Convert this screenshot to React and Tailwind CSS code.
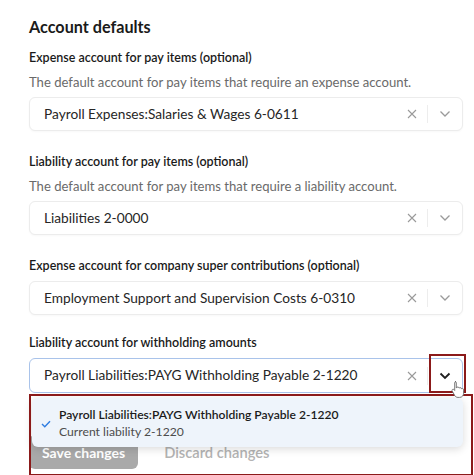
import React from 'react';

const font = { fontFamily: 'Lato, "Noto Sans", sans-serif' };

const ClearIcon = () => (
  <svg width="10" height="10" viewBox="0 0 10 10" className="text-[#9a9a9a]">
    <path d="M1 1l8 8M9 1l-8 8" stroke="currentColor" strokeWidth="1.1" fill="none" />
  </svg>
);

const Chevron = ({ dark }) => (
  <svg width="12" height="8" viewBox="0 0 12 8" className={dark ? 'text-[#1f1f1f]' : 'text-[#9a9a9a]'}>
    <path d="M1.5 1.5l4.5 4.5 4.5-4.5" stroke="currentColor" strokeWidth={dark ? 1.8 : 1.3} fill="none" />
  </svg>
);

const SelectBox = ({ value, focused }) => (
  <div
    className={`flex items-center rounded-md bg-white ${
      focused ? 'border border-[#a9c3ea] h-[35px]' : 'border border-[#ececec] h-[34px] shadow-[0_1px_2px_rgba(0,0,0,0.03)]'
    }`}
  >
    <span className="flex-1 pl-[14px] text-[13.7px] text-[#262626] truncate">{value}</span>
    <div className="w-[30px] flex justify-center">
      <ClearIcon />
    </div>
    <div className="w-px h-[18px] bg-[#ededed]" />
    <div className="w-[34px] flex justify-center">
      <Chevron dark={focused} />
    </div>
  </div>
);

const Field = ({ label, hint, value, focused, gap = 'mt-[21px]' }) => (
  <div className={gap}>
    <div className="text-[12.5px] leading-5 font-semibold text-[#1a1a1a]">{label}</div>
    {hint && <div className="mt-1 text-[13.1px] leading-5 text-[#6a6a6a]">{hint}</div>}
    <div className="mt-[5px]">
      <SelectBox value={value} focused={focused} />
    </div>
  </div>
);

export default function App() {
  return (
    <div className="relative h-[475px] w-[474px] overflow-hidden bg-white pl-[29px] pr-[11px] pt-[14px]" style={font}>
      <h2 className="text-[16.2px] leading-[26px] font-bold text-[#1a1a1a]">Account defaults</h2>

      <Field
        gap="mt-[8px]"
        label="Expense account for pay items (optional)"
        hint="The default account for pay items that require an expense account."
        value="Payroll Expenses:Salaries & Wages 6-0611"
      />
      <Field
        label="Liability account for pay items (optional)"
        hint="The default account for pay items that require a liability account."
        value="Liabilities 2-0000"
      />
      <Field
        label="Expense account for company super contributions (optional)"
        value="Employment Support and Supervision Costs 6-0310"
      />
      <Field
        gap="mt-[18px]"
        label="Liability account for withholding amounts"
        value="Payroll Liabilities:PAYG Withholding Payable 2-1220"
        focused
      />

      <div className="mt-[42px] flex items-center gap-[26px]">
        <button className="h-[34px] px-[13px] rounded-md bg-[#a9a9a9] text-white text-[14px] font-bold">
          Save changes
        </button>
        <span className="text-[14.7px] font-semibold text-[#b3b3b3]">Discard changes</span>
      </div>

      {/* open dropdown */}
      <div className="absolute left-[32px] top-[398px] w-[431px] h-[49px] rounded-md bg-[#eef4fb] shadow-[0_2px_8px_rgba(0,0,0,0.15)] flex items-center">
        <svg width="10" height="8" viewBox="0 0 10 8" className="ml-[9px] mt-[2px] text-[#2f7de1]">
          <path d="M1 4l2.8 2.8L9 1.2" stroke="currentColor" strokeWidth="1.4" fill="none" />
        </svg>
        <div className="ml-[8px] flex flex-col">
          <span className="text-[12.1px] leading-[17px] font-semibold text-[#1a1a1a]">
            Payroll Liabilities:PAYG Withholding Payable 2-1220
          </span>
          <span className="text-[12.2px] leading-[17px] text-[#4d4d4d]">Current liability 2-1220</span>
        </div>
      </div>

      {/* annotation boxes */}
      <div className="absolute left-[429px] top-[354px] w-[37px] h-[39px] border-2 border-[#8b1a1a]" />
      <div className="absolute left-[29px] top-[394px] w-[444px] h-[82px] border-2 border-[#8b1a1a]" />

      {/* pointer cursor */}
      <svg width="14" height="18" viewBox="0 0 14 18" className="absolute left-[451px] top-[380px]">
        <path
          d="M4 1.5c.8 0 1.3.6 1.3 1.3V8l.2-.1c.2-.6.7-.9 1.3-.9.7 0 1.2.5 1.3 1.1.3-.3.7-.5 1.1-.5.7 0 1.2.5 1.3 1.1.2-.1.5-.2.8-.2.8 0 1.3.6 1.3 1.3v3.4c0 2.3-1.6 4.2-4 4.2H7c-1.4 0-2.4-.6-3.2-1.7L1.2 11c-.4-.6-.2-1.3.4-1.6.5-.3 1.1-.1 1.5.3l.6.8V2.8c0-.7.5-1.3 1.3-1.3z"
          fill="#fff"
          stroke="#6b6b6b"
          strokeWidth="0.9"
        />
      </svg>
    </div>
  );
}
